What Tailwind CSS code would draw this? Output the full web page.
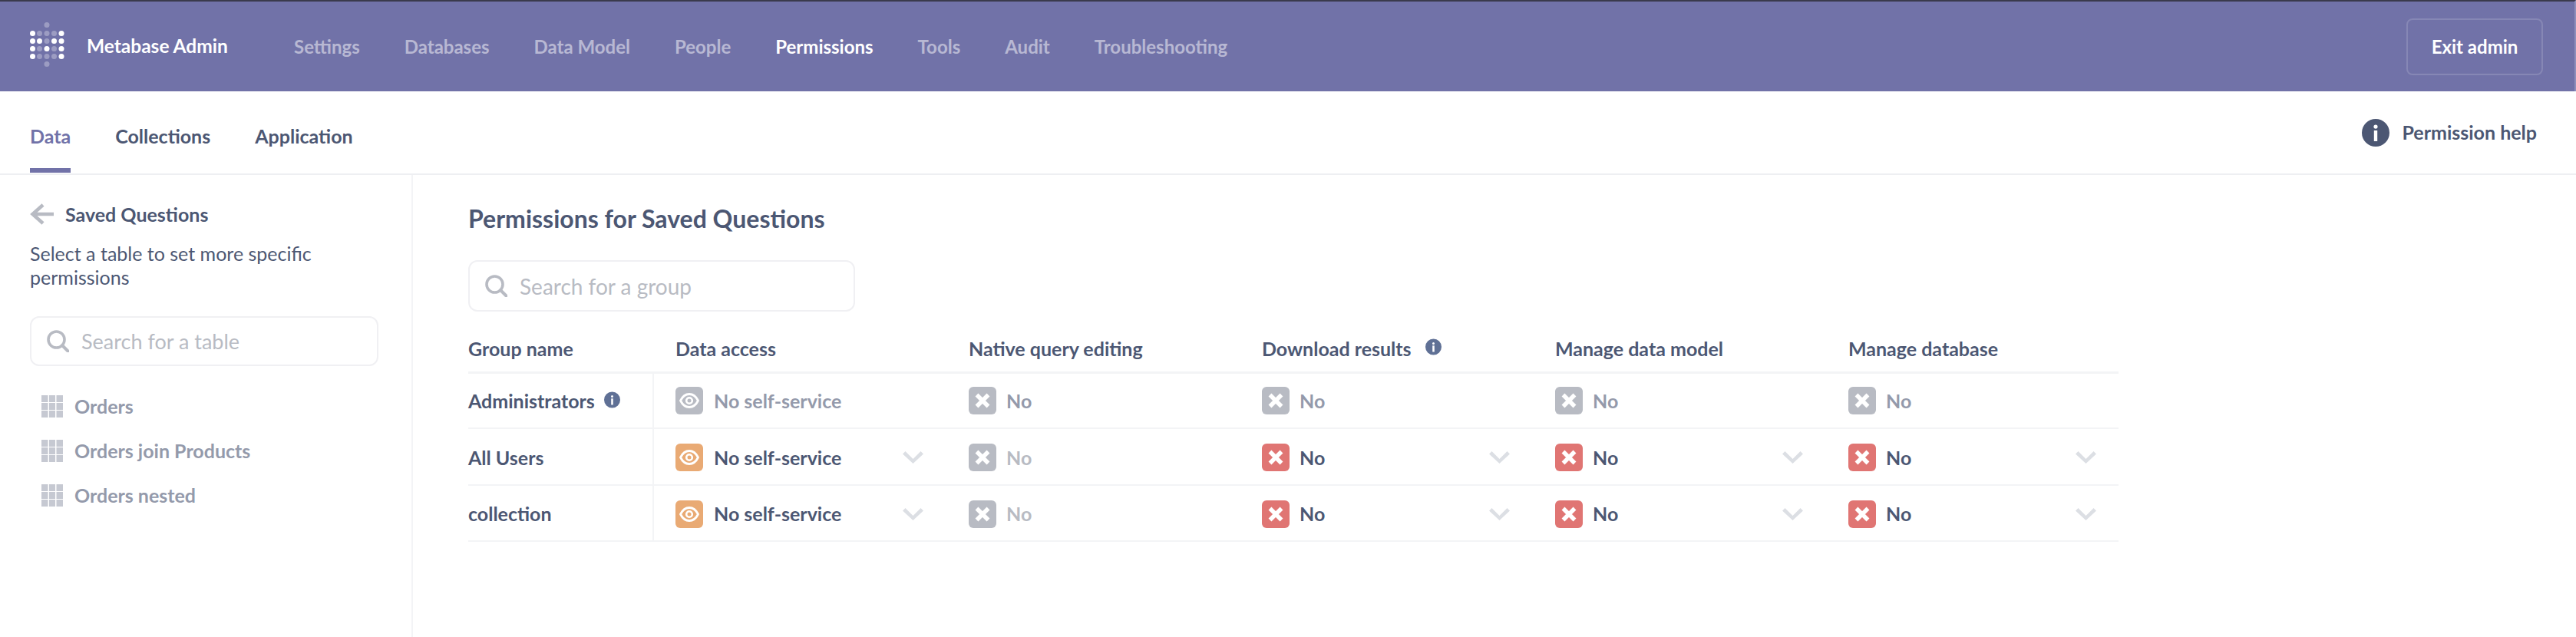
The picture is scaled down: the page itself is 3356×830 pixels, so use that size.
<!DOCTYPE html>
<html lang="en">
<head>
    <meta charset="UTF-8">
    <title>Permissions - Metabase Admin</title>
    <script src="https://cdn.jsdelivr.net/npm/@tailwindcss/browser@4"></script>
</head>
<body class="bg-white font-['Lato',sans-serif] font-bold text-[#4c5773] text-[25px] leading-none overflow-hidden">
    <!-- shared icons -->
    <svg class="hidden">
        <symbol id="search" viewBox="0 0 29 29"><circle cx="12.5" cy="12.5" r="10.5" fill="none" stroke="currentColor" stroke-width="3.6"/><path d="M20 20l7.5 7.5" stroke="currentColor" stroke-width="4" stroke-linecap="round"/></symbol>
        <symbol id="info" viewBox="0 0 36 36"><path fill-rule="evenodd" d="M18 0a18 18 0 1 1 0 36a18 18 0 1 1 0-36zM18 7.5a2.6 2.6 0 1 0 0 5.2a2.6 2.6 0 1 0 0-5.2zM15.8 15h4.4v14h-4.4z" fill="currentColor"/></symbol>
        <symbol id="eye" viewBox="0 0 36 36"><path d="M18 9.500C12.500 9.500 8.500 14 6.500 18c2 4 6 8.500 11.500 8.500S27.500 22 29.500 18C27.500 14 23.500 9.500 18 9.500z" fill="none" stroke="#fff" stroke-width="2.800" stroke-linejoin="round"/><circle cx="18" cy="18" r="3.800" fill="none" stroke="#fff" stroke-width="2.600"/></symbol>
        <symbol id="cross" viewBox="0 0 36 36"><path d="M10.500 10.500l15 15M25.500 10.500l-15 15" stroke="#fff" stroke-width="5.500"/></symbol>
        <symbol id="chevron" viewBox="0 0 27 16"><path d="M0 3.500L3.500 0l10 10 10-10L27 3.500 13.500 16z" fill="#dcdfe4"/></symbol>
        <symbol id="grid" viewBox="0 0 28 29"><path fill="#c6c9d2" d="M0 0h8.500v9H0zM10 0h8v9h-8zM19.500 0H28v9h-8.500zM0 10h8.500v9H0zM10 10h8v9h-8zM19.500 10H28v9h-8.500zM0 20h8.500v9H0zM10 20h8v9h-8zM19.500 20H28v9h-8.500z"/></symbol>
    </svg>

    <header class="h-[119px] border-t-2 border-t-[#3a3a4c] border-r-2 border-r-[#8e8fbb] bg-[#7172a8] flex items-center pl-[39px] pr-[41px] text-[24px] text-white">
        <svg class="w-[46px] h-[60px] mb-[3px] shrink-0" viewBox="0 0 46 60">
            <g fill="#fff" opacity=".3">
                <circle cx="22" cy="3.500" r="3.500"/><circle cx="12.500" cy="14.500" r="3.500"/><circle cx="22" cy="14.500" r="3.500"/><circle cx="31.500" cy="14.500" r="3.500"/><circle cx="22" cy="24.500" r="3.500"/><circle cx="12.500" cy="34.500" r="3.500"/><circle cx="31.500" cy="34.500" r="3.500"/><circle cx="12.500" cy="44.500" r="3.500"/><circle cx="22" cy="44.500" r="3.500"/><circle cx="31.500" cy="44.500" r="3.500"/><circle cx="22" cy="54.500" r="3.500"/>
            </g>
            <g fill="#fff">
                <circle cx="3.500" cy="14.500" r="3.500"/><circle cx="41" cy="14.500" r="3.500"/><circle cx="3.500" cy="24.500" r="3.500"/><circle cx="12.500" cy="24.500" r="3.500"/><circle cx="31.500" cy="24.500" r="3.500"/><circle cx="41" cy="24.500" r="3.500"/><circle cx="3.500" cy="34.500" r="3.500"/><circle cx="22" cy="34.500" r="3.500"/><circle cx="41" cy="34.500" r="3.500"/><circle cx="3.500" cy="44.500" r="3.500"/><circle cx="41" cy="44.500" r="3.500"/>
            </g>
        </svg>
        <span class="ml-[28px] w-[270px] text-[24.5px]">Metabase Admin</span>
        <nav class="flex gap-[58px] text-white/50">
            <a>Settings</a>
            <a>Databases</a>
            <a>Data Model</a>
            <a>People</a>
            <a class="text-white">Permissions</a>
            <a>Tools</a>
            <a>Audit</a>
            <a>Troubleshooting</a>
        </nav>
        <button class="ml-auto w-[178px] h-[74px] border-2 border-white/15 rounded-lg">Exit admin</button>
    </header>

    <div class="h-[109px] border-b-2 border-[#eeeff2] flex items-stretch pl-[39px] pr-[51px]">
        <div class="flex gap-[58px]">
            <a class="text-[#7172a8] border-b-[6px] border-[#7172a8] mb-px flex items-center pt-[17px]">Data</a>
            <a class="flex items-center pt-[10px]">Collections</a>
            <a class="flex items-center pt-[10px]">Application</a>
        </div>
        <a class="ml-auto flex items-center gap-[16px]">
            <svg class="w-[36px] h-[36px]"><use href="#info"/></svg>
            Permission help
        </a>
    </div>

    <div class="flex h-[602px]">
        <aside class="w-[538px] shrink-0 border-r-2 border-[#f3f4f6] pl-[39px] pr-[43px]">
            <div class="flex items-center gap-[15px] pt-[37px]">
                <svg class="w-[31px] h-[28px] text-[#b8bbc3]" viewBox="0 0 31 28"><path d="M31 14H4M17 2L3.500 14 17 26" fill="none" stroke="currentColor" stroke-width="4.500"/></svg>
                <span>Saved Questions</span>
            </div>
            <p class="mt-[22px] font-normal leading-[31px]">Select a table to set more specific permissions</p>
            <div class="mt-[35px] h-[65px] border-2 border-[#f0f0f3] rounded-xl flex items-center pl-[20px] text-[#b8bbc3] font-normal gap-[16px] text-[27px]">
                <svg class="w-[29px] h-[29px]"><use href="#search"/></svg>
                <span>Search for a table</span>
            </div>
            <ul class="mt-[38px] pl-[15px] space-y-[29px] text-[#949aab]">
                <li class="flex items-center gap-[15px] h-[29px]"><svg class="w-[28px] h-[29px]"><use href="#grid"/></svg>Orders</li>
                <li class="flex items-center gap-[15px] h-[29px]"><svg class="w-[28px] h-[29px]"><use href="#grid"/></svg>Orders join Products</li>
                <li class="flex items-center gap-[15px] h-[29px]"><svg class="w-[28px] h-[29px]"><use href="#grid"/></svg>Orders nested</li>
            </ul>
        </aside>

        <main class="pl-[72px]">
            <h2 class="mt-[37px] text-[32px] leading-[40px]">Permissions for Saved Questions</h2>
            <div class="mt-[34px] w-[504px] h-[67px] border-2 border-[#f0f0f3] rounded-xl flex items-center pl-[20px] text-[#b8bbc3] font-normal gap-[16px] text-[28px]">
                <svg class="w-[29px] h-[29px]"><use href="#search"/></svg>
                <span>Search for a group</span>
            </div>

            <div class="mt-[34px] w-[2150px] grid grid-cols-[240px_repeat(5,382px)]">
                <!-- header -->
                <div class="h-[47px] pb-[15px] flex items-center border-b-[3px] border-[#f3f4f6]">Group name</div>
                <div class="h-[47px] pb-[15px] pl-[30px] flex items-center border-b-[3px] border-[#f3f4f6]">Data access</div>
                <div class="h-[47px] pb-[15px] pl-[30px] flex items-center border-b-[3px] border-[#f3f4f6]">Native query editing</div>
                <div class="h-[47px] pb-[15px] pl-[30px] flex items-center gap-[18px] border-b-[3px] border-[#f3f4f6]">Download results <svg class="w-[21px] h-[22px] text-[#5f7095] mb-[6px]"><use href="#info"/></svg></div>
                <div class="h-[47px] pb-[15px] pl-[30px] flex items-center border-b-[3px] border-[#f3f4f6]">Manage data model</div>
                <div class="h-[47px] pb-[15px] pl-[30px] flex items-center border-b-[3px] border-[#f3f4f6]">Manage database</div>

                <!-- Administrators -->
                <div class="h-[72px] flex items-center gap-[12px] border-b-2 border-[#f3f4f6]">Administrators <svg class="w-[21px] h-[22px] text-[#5f7095] mb-[2px]"><use href="#info"/></svg></div>
                <div class="h-[72px] pl-[28px] flex items-center gap-[14px] border-b-2 border-l-2 border-[#f3f4f6] text-[#949aab]"><svg class="w-[36px] h-[36px] rounded-md bg-[#b8bbc3]"><use href="#eye"/></svg>No self-service</div>
                <div class="h-[72px] pl-[30px] flex items-center gap-[13px] border-b-2 border-[#f3f4f6] text-[#949aab]"><svg class="w-[36px] h-[36px] rounded-md bg-[#b8bbc3]"><use href="#cross"/></svg>No</div>
                <div class="h-[72px] pl-[30px] flex items-center gap-[13px] border-b-2 border-[#f3f4f6] text-[#949aab]"><svg class="w-[36px] h-[36px] rounded-md bg-[#b8bbc3]"><use href="#cross"/></svg>No</div>
                <div class="h-[72px] pl-[30px] flex items-center gap-[13px] border-b-2 border-[#f3f4f6] text-[#949aab]"><svg class="w-[36px] h-[36px] rounded-md bg-[#b8bbc3]"><use href="#cross"/></svg>No</div>
                <div class="h-[72px] pl-[30px] flex items-center gap-[13px] border-b-2 border-[#f3f4f6] text-[#949aab]"><svg class="w-[36px] h-[36px] rounded-md bg-[#b8bbc3]"><use href="#cross"/></svg>No</div>

                <!-- All Users -->
                <div class="h-[74px] pt-[2px] flex items-center border-b-2 border-[#f3f4f6]">All Users</div>
                <div class="h-[74px] pt-[2px] pl-[28px] pr-[29px] flex items-center gap-[14px] border-b-2 border-l-2 border-[#f3f4f6]"><svg class="w-[36px] h-[36px] rounded-md bg-[#e9aa74]"><use href="#eye"/></svg>No self-service<svg class="w-[27px] h-[16px] ml-auto"><use href="#chevron"/></svg></div>
                <div class="h-[74px] pt-[2px] pl-[30px] flex items-center gap-[13px] border-b-2 border-[#f3f4f6] text-[#b8bbc3]"><svg class="w-[36px] h-[36px] rounded-md bg-[#b8bbc3]"><use href="#cross"/></svg>No</div>
                <div class="h-[74px] pt-[2px] pl-[30px] pr-[29px] flex items-center gap-[13px] border-b-2 border-[#f3f4f6]"><svg class="w-[36px] h-[36px] rounded-md bg-[#e07573]"><use href="#cross"/></svg>No<svg class="w-[27px] h-[16px] ml-auto"><use href="#chevron"/></svg></div>
                <div class="h-[74px] pt-[2px] pl-[30px] pr-[29px] flex items-center gap-[13px] border-b-2 border-[#f3f4f6]"><svg class="w-[36px] h-[36px] rounded-md bg-[#e07573]"><use href="#cross"/></svg>No<svg class="w-[27px] h-[16px] ml-auto"><use href="#chevron"/></svg></div>
                <div class="h-[74px] pt-[2px] pl-[30px] pr-[29px] flex items-center gap-[13px] border-b-2 border-[#f3f4f6]"><svg class="w-[36px] h-[36px] rounded-md bg-[#e07573]"><use href="#cross"/></svg>No<svg class="w-[27px] h-[16px] ml-auto"><use href="#chevron"/></svg></div>

                <!-- collection -->
                <div class="h-[73px] pt-[2px] flex items-center border-b-2 border-[#f3f4f6]">collection</div>
                <div class="h-[73px] pt-[2px] pl-[28px] pr-[29px] flex items-center gap-[14px] border-b-2 border-l-2 border-[#f3f4f6]"><svg class="w-[36px] h-[36px] rounded-md bg-[#e9aa74]"><use href="#eye"/></svg>No self-service<svg class="w-[27px] h-[16px] ml-auto"><use href="#chevron"/></svg></div>
                <div class="h-[73px] pt-[2px] pl-[30px] flex items-center gap-[13px] border-b-2 border-[#f3f4f6] text-[#b8bbc3]"><svg class="w-[36px] h-[36px] rounded-md bg-[#b8bbc3]"><use href="#cross"/></svg>No</div>
                <div class="h-[73px] pt-[2px] pl-[30px] pr-[29px] flex items-center gap-[13px] border-b-2 border-[#f3f4f6]"><svg class="w-[36px] h-[36px] rounded-md bg-[#e07573]"><use href="#cross"/></svg>No<svg class="w-[27px] h-[16px] ml-auto"><use href="#chevron"/></svg></div>
                <div class="h-[73px] pt-[2px] pl-[30px] pr-[29px] flex items-center gap-[13px] border-b-2 border-[#f3f4f6]"><svg class="w-[36px] h-[36px] rounded-md bg-[#e07573]"><use href="#cross"/></svg>No<svg class="w-[27px] h-[16px] ml-auto"><use href="#chevron"/></svg></div>
                <div class="h-[73px] pt-[2px] pl-[30px] pr-[29px] flex items-center gap-[13px] border-b-2 border-[#f3f4f6]"><svg class="w-[36px] h-[36px] rounded-md bg-[#e07573]"><use href="#cross"/></svg>No<svg class="w-[27px] h-[16px] ml-auto"><use href="#chevron"/></svg></div>
            </div>
        </main>
    </div>
</body>
</html>
